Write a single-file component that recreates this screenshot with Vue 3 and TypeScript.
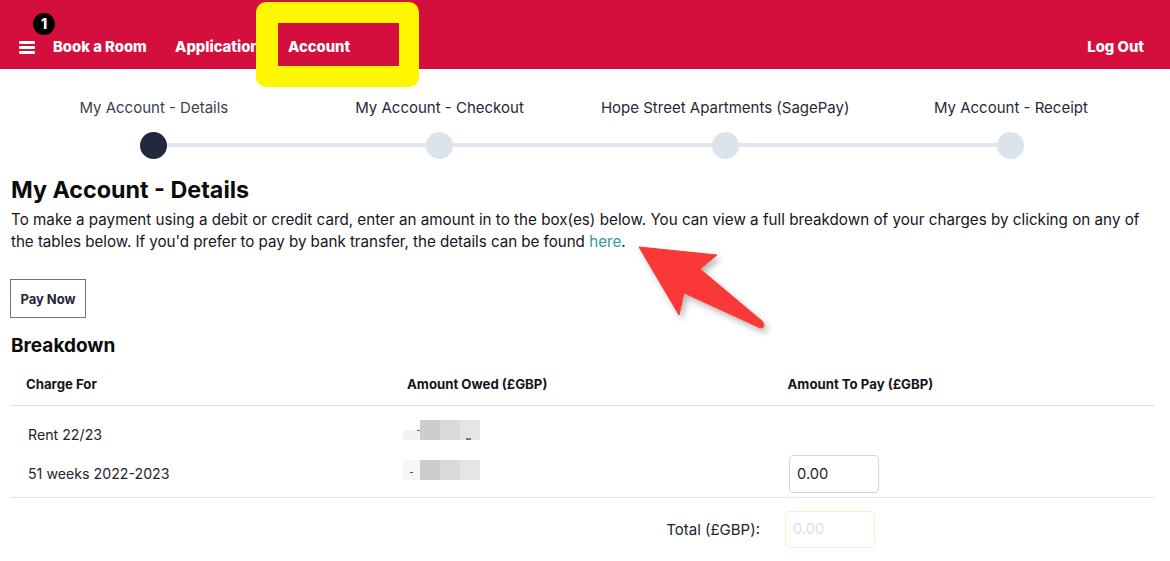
<script setup lang="ts">
const navItems: string[] = ['Book a Room', 'Applications', 'Account']
const steps: { label: string; active: boolean }[] = [
  { label: 'My Account - Details', active: true },
  { label: 'My Account - Checkout', active: false },
  { label: 'Hope Street Apartments (SagePay)', active: false },
  { label: 'My Account - Receipt', active: false },
]
</script>

<template>
  <div class="page">
    <header class="topbar">
      <button class="burger" aria-label="Menu"><span></span><span></span><span></span></button>
      <nav class="nav">
        <a v-for="item in navItems" :key="item" class="nav-link">{{ item }}</a>
      </nav>
      <a class="logout">Log Out</a>
    </header>

    <section class="steps">
      <div v-for="(s, i) in steps" :key="s.label" class="step" :class="{ first: i === 0, last: i === steps.length - 1 }">
        <div class="step-label">{{ s.label }}</div>
        <div class="step-track"><span class="dot" :class="{ active: s.active }"></span></div>
      </div>
    </section>

    <main class="content">
      <h1 class="title">My Account - Details</h1>
      <p class="intro">
        To make a payment using a debit or credit card, enter an amount in to the box(es) below. You can view a full breakdown of your charges by clicking on any of <span class="tight">the tables below. If you'd prefer to pay by bank transfer, the details can be found</span> <a class="link">here</a>.
      </p>
      <button class="pay">Pay Now</button>
      <h2 class="sub">Breakdown</h2>

      <div class="thead">
        <div>Charge For</div>
        <div>Amount Owed (£GBP)</div>
        <div>Amount To Pay (£GBP)</div>
      </div>
      <div class="row r1">
        <div class="cell-name">Rent 22/23</div>
        <div class="mosaic one"><i class="a"><b class="tilde"></b></i><i class="b"></i><i class="c"></i><i class="d"><b class="tick"></b></i></div>
        <div></div>
      </div>
      <div class="row r2">
        <div class="cell-name">51 weeks 2022-2023</div>
        <div class="mosaic two"><i class="a"><b class="dash"></b></i><i class="b"></i><i class="c"></i><i class="d"></i></div>
        <div class="input">0.00</div>
      </div>
      <div class="total">
        <span class="total-label">Total (£GBP):</span>
        <div class="input disabled">0.00</div>
      </div>
    </main>

    <div class="badge">1</div>
    <div class="highlight"></div>
    <svg class="arrow" width="150" height="110" viewBox="0 0 150 110">
      <defs>
        <filter id="sh" x="-20%" y="-20%" width="140%" height="140%">
          <feDropShadow dx="3" dy="4" stdDeviation="3" flood-color="#000" flood-opacity="0.28" />
        </filter>
      </defs>
      <path d="M9 7 L87 15 L70 29 L132 81 Q136 86 132 88 Q129 88 126 86 L54 53 L49 75 Z" fill="#fb3838" stroke="#fb3838" stroke-width="1" stroke-linejoin="round" filter="url(#sh)" />
    </svg>
  </div>
</template>

<style>
html, body { margin: 0; background: #fff; }
</style>

<style scoped>
.page {
  position: relative;
  width: 1170px;
  height: 561px;
  overflow: hidden;
  font-family: Inter, "Open Sans", "Liberation Sans", sans-serif;
  color: #111;
  background: #fff;
}
.topbar {
  height: 69px;
  background: #d50f3d;
  display: flex;
  align-items: center;
  padding: 25px 26px 0 19px;
  box-sizing: border-box;
  color: #fff;
  font-weight: 800;
  font-size: 14.8px;
}
.burger {
  width: 16px;
  height: 13px;
  padding: 0;
  border: 0;
  background: none;
  display: flex;
  flex-direction: column;
  justify-content: space-between;
}
.burger span { display: block; height: 3px; border-radius: 1px; background: #fff; }
.nav { display: flex; margin-left: 18px; gap: 27px; white-space: nowrap; }
.nav-link:nth-child(1) { width: 95px; }
.nav-link:nth-child(2) { width: 86px; }
.logout { margin-left: auto; }

.steps { display: flex; padding: 0 0 0 11px; margin-top: 29px; }
.step { width: 285.7px; text-align: center; }
.step-label { font-size: 15px; line-height: 20px; color: #3b3f4c; }
.step:not(.first) .step-label { color: #262a36; }
.step-track { position: relative; height: 28px; margin-top: 13px; display: flex; justify-content: center; align-items: center; }
.step-track::before {
  content: "";
  position: absolute;
  left: 0; right: 0; top: 12px;
  height: 4px;
  background: #dfe7ee;
}
.step.first .step-track::before { left: 50%; }
.step.last .step-track::before { right: 50%; }
.dot { position: relative; width: 27px; height: 27px; border-radius: 50%; background: #dbe4eb; }
.dot.active { background: #232840; }

.content { padding: 0 16px 0 10px; }
.title { margin: 15px 0 0 1px; font-size: 23.3px; line-height: 32px; font-weight: 700; color: #0b0b0b; }
.intro { margin: 3px 0 0 1px; font-size: 15.2px; line-height: 22px; color: #16161c; letter-spacing: 0.01px; }
.tight { letter-spacing: -0.05px; }
.link { color: #2a9c9c; }
.pay {
  display: block;
  margin-top: 26px;
  width: 76px;
  height: 39px;
  padding: 0;
  background: #fff;
  border: 1px solid #70727c;
  font: 700 13px Inter, "Liberation Sans", sans-serif;
  color: #232637;
}
.sub { margin: 15px 0 0 1px; font-size: 19px; line-height: 26px; font-weight: 700; color: #0b0b0b; }
.thead {
  display: grid;
  margin-top: 17px;
  height: 30px;
  padding-left: 16px;
  box-sizing: border-box;
  grid-template-columns: 381px 380.5px 1fr;
  border-bottom: 1px solid #dedfe2;
  font-size: 13.2px;
  font-weight: 700;
  line-height: 16px;
  color: #15151b;
}
.row { display: grid; padding-left: 18px; padding-top: 19px; box-sizing: border-box; align-items: start; font-size: 14.2px; color: #22242c; grid-template-columns: 375px 386px 1fr; }
.r1 { height: 39px; }
.r2 { height: 53px; border-bottom: 1px solid #e4e5e7; }
.cell-name { line-height: 20px; }
.mosaic { display: flex; align-items: flex-end; height: 20px; }
.r1 .mosaic { margin-top: -5px; }
.r2 .mosaic { margin-top: -4px; }
.mosaic i { display: block; height: 20px; position: relative; }
.mosaic .a { width: 17px; height: 10px; background: #f2f2f2; }
.mosaic .b { width: 20px; background: #cdcdcd; }
.mosaic .c { width: 20px; background: #d9d9d9; }
.mosaic .d { width: 20px; background: #e5e5e5; }
.mosaic.two .a { height: 20px; background: #f6f6f6; }
.dash { position: absolute; left: 7px; top: 12px; width: 3px; height: 1px; background: #555; }
.tilde { position: absolute; left: 14px; top: 0; width: 8px; height: 1px; background: #666; }
.tick { position: absolute; left: 6px; top: 18px; width: 5px; height: 2px; background: #777; }
.input {
  box-sizing: border-box;
  width: 90px;
  height: 38px;
  border: 1px solid #d3d6dd;
  border-radius: 4px;
  padding: 0 7px;
  line-height: 36px;
  font-size: 14.7px;
  color: #1d1f27;
  background: #fff;
}
.r2 .input { margin-top: -9px; }
.total {
  display: flex;
  justify-content: flex-end;
  align-items: center;
  margin-top: 13px;
  padding-right: 279px;
  font-size: 15px;
  color: #22242c;
}
.total-label { margin-right: 25px; }
.input.disabled {
  height: 37px;
  border-color: #fbefca;
  color: #dfe0e4;
  line-height: 35px;
}

.badge {
  position: absolute;
  left: 33px;
  top: 13px;
  width: 22px;
  height: 22px;
  border-radius: 50%;
  background: #000;
  color: #fff;
  font-size: 14px;
  font-weight: 800;
  line-height: 22px;
  text-align: center;
}
.highlight {
  position: absolute;
  left: 256px;
  top: 2px;
  width: 163px;
  height: 85px;
  box-sizing: border-box;
  border: solid #fff700;
  border-width: 21px 20px 21px 22px;
  border-radius: 10px;
}
.arrow { position: absolute; left: 630px; top: 240px; }
</style>
